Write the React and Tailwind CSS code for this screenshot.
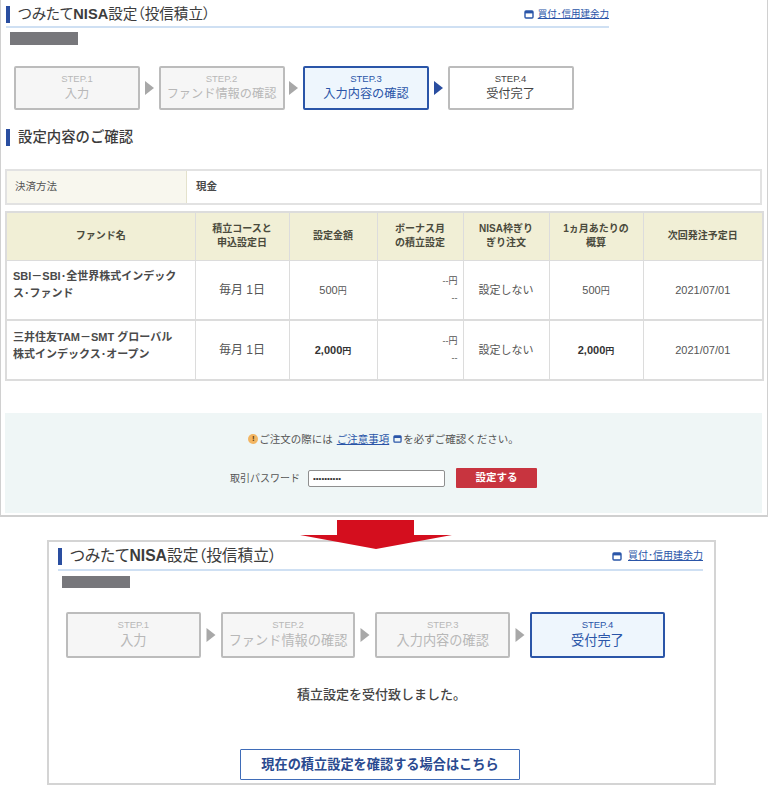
import React from "react";

const FONT = "font-['Liberation_Sans','Noto_Sans_CJK_JP',sans-serif]";

const stepStyles = {
    done: "border-[#bcbcbc] bg-[#f6f6f6] text-[#b8b8b8]",
    active: "border-[#2a55a8] bg-[#eef6fd] text-[#2a55a8]",
    todo: "border-[#bcbcbc] bg-white text-[#444444]",
};

const fundRows = [
    {
        name: ["SBI－SBI･全世界株式インデック", "ス･ファンド"],
        amount: "500",
        bold: false,
    },
    {
        name: ["三井住友TAM－SMT グローバル", "株式インデックス･オープン"],
        amount: "2,000",
        bold: true,
    },
];

const headers = [
    ["ファンド名"],
    ["積立コースと", "申込設定日"],
    ["設定金額"],
    ["ボーナス月", "の積立設定"],
    ["NISA枠ぎり", "ぎり注文"],
    ["1ヵ月あたりの", "概算"],
    ["次回発注予定日"],
];

function WindowIcon({ className }) {
    return (
        <svg viewBox="0 0 10 9" className={className}>
            <rect x="1" y="1" width="8" height="7" rx="1" fill="none" stroke="#2a55a8" strokeWidth="1.4" />
            <rect x="1" y="1" width="8" height="2.4" fill="#2a55a8" />
        </svg>
    );
}

function Heading({ barClass, textClass, children }) {
    return (
        <div className="flex items-center">
            <span className={`shrink-0 bg-[#2a4ea0] ${barClass}`} />
            <span className={`text-[#3c3c3c] ${textClass}`}>{children}</span>
        </div>
    );
}

function TitleBar({ wrapClass, titleClass, linkClass }) {
    return (
        <div className={`flex items-center justify-between border-b-2 border-[#cfe0f3] ${wrapClass}`}>
            <Heading barClass="h-[17px] w-1 mr-2" textClass={`leading-5 [font-feature-settings:'palt'] ${titleClass}`}>
                つみたて<span className="font-bold">NISA</span>設定（投信積立）
            </Heading>
            <a className={`flex items-center leading-3 text-[#2a55a8] underline ${linkClass}`}>
                <WindowIcon className="h-[9px] w-[10px]" />
                買付･信用建余力
            </a>
        </div>
    );
}

function StepBar({ steps, boxClass, arrowClass, labelClass, wrapClass }) {
    return (
        <div className={`flex items-center ${wrapClass}`}>
            {steps.map((step, i) => (
                <React.Fragment key={step.no}>
                    {i > 0 && (
                        <svg viewBox="0 0 9 14" className={arrowClass}>
                            <path d="M0 0 L9 7 L0 14 Z" fill={step.prev === "active" ? "#2a4ea0" : "#a8a8a8"} />
                        </svg>
                    )}
                    <div className={`flex shrink-0 flex-col items-center justify-center rounded-[2px] border-2 ${boxClass} ${stepStyles[step.state]}`}>
                        <span className="text-[9.5px] leading-3">STEP.{step.no}</span>
                        <span className={`whitespace-nowrap ${labelClass}`}>{step.label}</span>
                    </div>
                </React.Fragment>
            ))}
        </div>
    );
}

function FundTable() {
    const widths = ["w-[189px]", "w-[94px]", "w-[88px]", "w-[86px]", "w-[86px]", "w-[94px]", "w-[120px]"];
    return (
        <table className="ml-[4px] mt-[6px] w-[757px] table-fixed border-collapse border-2 border-[#dcdcdc] text-[#555555]">
            <thead>
                <tr className="h-[48px] bg-[#f1efd6] text-[10px] font-bold leading-[14px] text-[#4a4a3c]">
                    {headers.map((lines, i) => (
                        <th key={i} className={`border border-[#dcdcdc] p-0 text-center font-bold ${widths[i]}`}>
                            {lines.map((l) => (
                                <div key={l}>{l}</div>
                            ))}
                        </th>
                    ))}
                </tr>
            </thead>
            <tbody className="text-[11px]">
                {fundRows.map((row) => (
                    <tr key={row.amount} className="h-[60px] border-b-2 border-[#dcdcdc]">
                        <td className="border-x border-[#dcdcdc] pl-[6px] pb-[9px] text-[11px] font-bold leading-[17px] text-[#4a4a4a]">
                            {row.name.map((l) => (
                                <div key={l} className="whitespace-nowrap">{l}</div>
                            ))}
                        </td>
                        <td className="border-x border-[#dcdcdc] text-center text-[12px]">毎月 1日</td>
                        <td className={`border-x border-[#dcdcdc] text-center ${row.bold ? "font-bold text-[#333333]" : ""}`}>
                            {row.amount}<span className="text-[9px]">円</span>
                        </td>
                        <td className="border-x border-[#dcdcdc] pr-[5px] text-right text-[9px] leading-[17px]">
                            <div>--<span>円</span></div>
                            <div>--</div>
                        </td>
                        <td className="border-x border-[#dcdcdc] text-center">設定しない</td>
                        <td className={`border-x border-[#dcdcdc] text-center ${row.bold ? "font-bold text-[#333333]" : ""}`}>
                            {row.amount}<span className="text-[9px]">円</span>
                        </td>
                        <td className="border-x border-[#dcdcdc] text-center">2021/07/01</td>
                    </tr>
                ))}
            </tbody>
        </table>
    );
}

export default function App() {
    const topSteps = [
        { no: 1, label: "入力", state: "done" },
        { no: 2, label: "ファンド情報の確認", state: "done", prev: "done" },
        { no: 3, label: "入力内容の確認", state: "active", prev: "done" },
        { no: 4, label: "受付完了", state: "todo", prev: "active" },
    ];
    const bottomSteps = [
        { no: 1, label: "入力", state: "done" },
        { no: 2, label: "ファンド情報の確認", state: "done", prev: "done" },
        { no: 3, label: "入力内容の確認", state: "done", prev: "done" },
        { no: 4, label: "受付完了", state: "active", prev: "done" },
    ];

    return (
        <div className={`relative h-[785px] w-[768px] overflow-hidden bg-white ${FONT}`}>
            {/* before */}
            <section className="h-[517px] border-x border-b-2 border-[#d0d0d0]">
                <TitleBar
                    wrapClass="ml-[5px] h-[28px] w-[603px] pt-[2px]"
                    titleClass="text-[14.6px]"
                    linkClass="gap-1 text-[9.5px]"
                />
                <div className="ml-[9px] mt-1 h-[13px] w-[68px] bg-[#77777b]" />
                <StepBar
                    steps={topSteps}
                    wrapClass="ml-[13px] mt-[21px] gap-[4.75px]"
                    boxClass="h-[44px] w-[126px]"
                    arrowClass="h-[14px] w-[9px] shrink-0"
                    labelClass="text-[12.2px] leading-[18px]"
                />
                <div className="ml-[5px] mt-[17px]">
                    <Heading barClass="h-[17px] w-1 mr-2" textClass="text-[14.4px] font-medium leading-5">
                        設定内容のご確認
                    </Heading>
                </div>
                <div className="ml-[4px] mt-[22px] flex h-[36px] w-[757px] items-center border-2 border-[#e2e2e2] text-[10.5px]">
                    <div className="flex h-full w-[180px] items-center border-r border-[#e4e2cc] bg-[#f8f7ee] pl-[8px] text-[#555555]">
                        決済方法
                    </div>
                    <div className="pl-[9px] font-bold text-[#4a4a4a]">現金</div>
                </div>
                <FundTable />
                <div className="ml-[4px] mt-[32px] flex h-[100px] w-[757px] flex-col items-center bg-[#eff6f6] pt-[19px] text-[#555555]">
                    <p className="flex items-center text-[10.5px] leading-[14px]">
                        <span className="mr-px flex h-[10px] w-[10px] items-center justify-center rounded-full bg-[#f2b562] text-[8px] font-bold text-[#5a3a10]">!</span>
                        ご注文の際には
                        <a className="mx-1 text-[#2a55a8] underline">ご注意事項</a>
                        <WindowIcon className="mr-px h-[8px] w-[9px]" />
                        を必ずご確認ください。
                    </p>
                    <div className="mt-[22px] flex items-center">
                        <span className="mr-[8px] text-[10px]">取引パスワード</span>
                        <input
                            type="password"
                            readOnly
                            value="abcdefghij"
                            className="h-[17px] w-[137px] rounded-[2px] border border-[#8f8f8f] bg-white px-1 text-[8px] text-[#333333]"
                        />
                        <button className="ml-[11px] h-[20px] w-[81px] rounded-[1px] bg-[#c8343f] text-[10.5px] font-bold text-white">
                            設定する
                        </button>
                    </div>
                </div>
            </section>

            {/* arrow between the two screens */}
            <svg viewBox="0 0 152 29" className="absolute left-[300px] top-[520px] z-10 h-[29px] w-[152px]">
                <path d="M37 0 H114 V15 H152 L76 29 L0 15 H37 Z" fill="#d40e1e" />
            </svg>

            {/* after */}
            <section className="ml-[47px] mt-[23px] h-[245px] w-[669px] border-2 border-[#d4d4d4] pt-[1px]">
                <TitleBar
                    wrapClass="mx-[9px] h-[28px] w-[645px]"
                    titleClass="text-[15.7px]"
                    linkClass="gap-[6px] text-[10px]"
                />
                <div className="ml-[13px] mt-[5px] h-[12px] w-[68px] bg-[#77777b]" />
                <StepBar
                    steps={bottomSteps}
                    wrapClass="ml-[17px] mt-[24px] gap-[5px]"
                    boxClass="h-[46px] w-[134.7px]"
                    arrowClass="h-[14px] w-[10px] shrink-0"
                    labelClass="text-[13.2px] leading-[20px]"
                />
                <p className="mt-[27px] text-center text-[13px] font-medium leading-5 text-[#444444]">
                    積立設定を受付致しました。
                </p>
                <div className="mt-[44px] flex justify-center pr-[3px]">
                    <button className="h-[31px] w-[280px] rounded-[1px] border-[1.5px] border-[#3f6cb8] bg-white text-[13.2px] font-bold text-[#2a4a90]">
                        現在の積立設定を確認する場合はこちら
                    </button>
                </div>
            </section>
        </div>
    );
}
